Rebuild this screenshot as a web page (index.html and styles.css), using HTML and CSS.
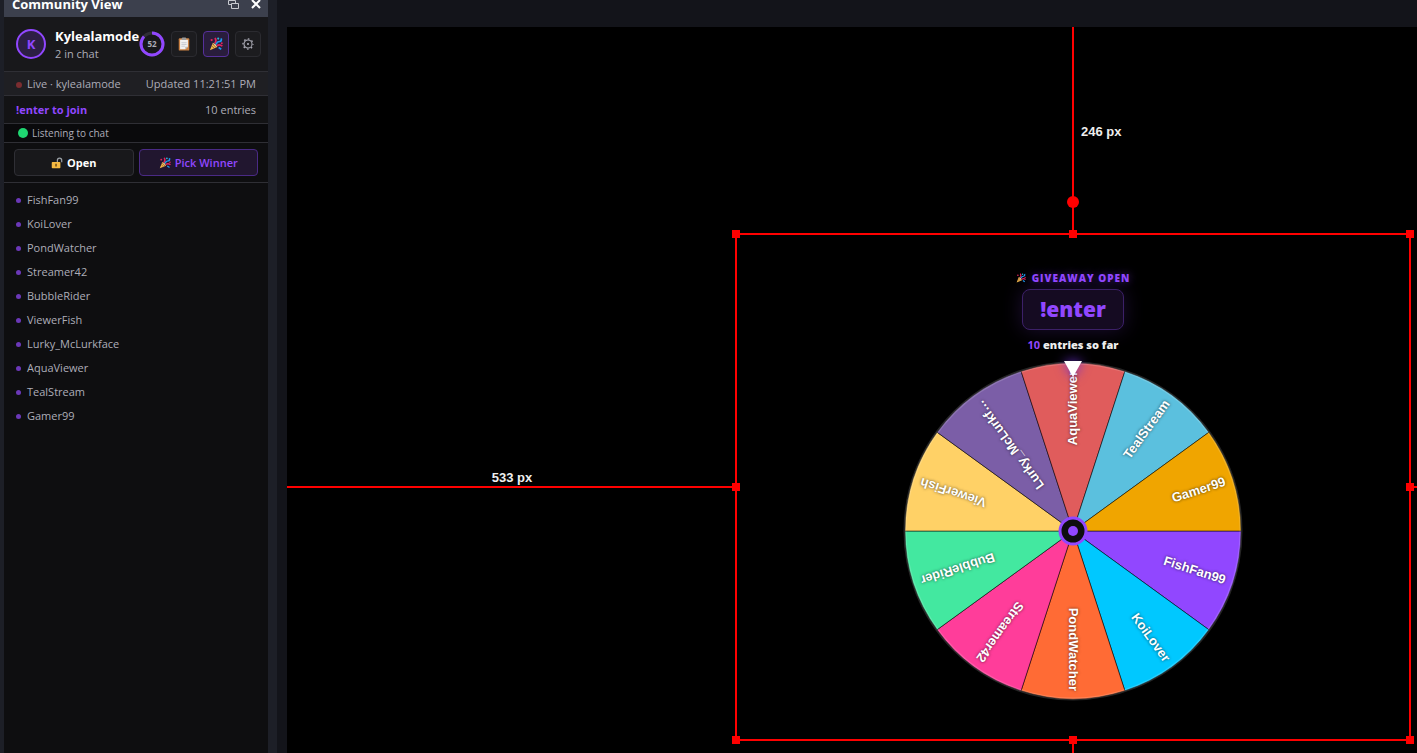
FILE: index.html
```html
<!DOCTYPE html>
<html lang="en">
<head>
    <meta charset="UTF-8">
    <meta name="viewport" content="width=device-width, initial-scale=1.0">
    <title>Community View</title>
    <link rel="stylesheet" href="styles.css">
</head>
<body>
    <svg class="defs" aria-hidden="true">
        <symbol id="party" viewBox="0 0 16 16">
            <path d="M1 15 L4.5 6.5 L9.5 11.5 Z" fill="#f2b84b"/>
            <path d="M3 10.2 L6 13 M4.2 7.6 L8 12" stroke="#8a5a2a" stroke-width="1"/>
            <path d="M4.5 6.5 Q8 7.5 9.5 11.5 Q6.5 10.5 4.5 6.5" fill="#f7d8a0"/>
            <path d="M6.5 7.5 Q9 4.5 7 1" stroke="#e0245e" stroke-width="2" fill="none"/>
            <path d="M8 8.5 Q9.5 4.8 12.5 5.2 Q14.6 4.6 14 1.5" stroke="#1d9bf0" stroke-width="1.9" fill="none"/>
            <path d="M9 10 Q12 7.6 15.3 10.4" stroke="#e0245e" stroke-width="2" fill="none"/>
            <path d="M11 12 L14 14" stroke="#1d9bf0" stroke-width="1.8"/>
            <circle cx="3" cy="3.5" r="1.3" fill="#e0245e"/>
            <circle cx="10.5" cy="1.8" r="1.2" fill="#29b6d8"/>
            <circle cx="14.6" cy="7" r="1.1" fill="#e0245e"/>
        </symbol>
        <symbol id="clipboard" viewBox="0 0 16 16">
            <rect x="2" y="1.5" width="12" height="14" rx="1" fill="#c98042"/>
            <path d="M3.5 3 H12.5 V11 L9.5 14 H3.5 Z" fill="#f1f1f1"/>
            <path d="M12.5 11 H9.5 V14 Z" fill="#b5b5b5"/>
            <path d="M5 6.5 H11 M5 8.5 H11 M5 10.5 H9" stroke="#b8bcc4" stroke-width="0.8"/>
            <rect x="5.5" y="0.5" width="5" height="3" rx="1" fill="#9a9a9a"/>
        </symbol>
        <symbol id="gear" viewBox="0 0 16 16">
            <circle cx="8" cy="8" r="4.6" fill="none" stroke="#adadb8" stroke-width="1.2"/>
            <circle cx="8" cy="8" r="5.8" fill="none" stroke="#adadb8" stroke-width="1.4" stroke-dasharray="1.8 2.755" stroke-dashoffset="0.9"/>
            <circle cx="8" cy="8" r="1.2" fill="#adadb8"/>
        </symbol>
        <symbol id="unlock" viewBox="0 0 16 16">
            <path d="M8.5 7 V4.5 A2.9 2.9 0 0 1 14.3 4.5 V7" fill="none" stroke="#9aa0a6" stroke-width="1.6"/>
            <rect x="1" y="6.5" width="11.5" height="8.5" rx="1" fill="#f5b942"/>
            <path d="M6.7 9 V12.5" stroke="#5b3c10" stroke-width="1.8"/>
        </symbol>
    </svg>

    <aside class="dock">
        <header class="dock-title">
            <h1>Community View</h1>
            <button class="dock-btn" aria-label="Float">
                <svg width="11" height="11" viewBox="0 0 11 11" fill="none" stroke="#c8cad0"><path d="M3.5 4.5 H0.5 V0.5 H7.5 V3.5"/><path d="M3.5 3.5 H10.5 V8.5 H3.5 Z"/></svg>
            </button>
            <button class="dock-btn" aria-label="Close">
                <svg width="10" height="10" viewBox="0 0 10 10" stroke="#fff" stroke-width="2"><path d="M1 0 L9 8 M9 0 L1 8"/></svg>
            </button>
        </header>

        <section class="profile">
            <div class="avatar">K</div>
            <div class="who">
                <strong>Kylealamode</strong>
                <span>2 in chat</span>
            </div>
            <div class="ring">
                <svg width="26" height="26" viewBox="0 0 26 26" fill="none" stroke-width="3">
                    <circle cx="13" cy="13" r="11" stroke="#2f2f35"/>
                    <circle cx="13" cy="13" r="11" stroke="#9147ff" pathLength="100" stroke-dasharray="87 13" transform="rotate(-90 13 13)"/>
                </svg>
                <span>52</span>
            </div>
            <button class="tool" aria-label="Log"><svg><use href="#clipboard"/></svg></button>
            <button class="tool active" aria-label="Giveaway"><svg><use href="#party"/></svg></button>
            <button class="tool" aria-label="Settings"><svg><use href="#gear"/></svg></button>
        </section>

        <div class="row status">
            <span class="live">Live · kylealamode</span>
            <span>Updated 11:21:51 PM</span>
        </div>
        <div class="row join">
            <strong>!enter to join</strong>
            <span>10 entries</span>
        </div>
        <div class="row listening">Listening to chat</div>

        <div class="actions">
            <button class="action"><svg><use href="#unlock"/></svg>Open</button>
            <button class="action pick"><svg><use href="#party"/></svg>Pick Winner</button>
        </div>

        <ul class="entries">
            <li>FishFan99</li>
            <li>KoiLover</li>
            <li>PondWatcher</li>
            <li>Streamer42</li>
            <li>BubbleRider</li>
            <li>ViewerFish</li>
            <li>Lurky_McLurkface</li>
            <li>AquaViewer</li>
            <li>TealStream</li>
            <li>Gamer99</li>
        </ul>
    </aside>

    <main class="preview">
        <div class="stage">
            <div class="source">
                <div class="guide guide-top"><span>246 px</span></div>
                <div class="guide guide-left"><span>533 px</span></div>
                <div class="guide guide-right"></div>
                <div class="guide guide-bottom"></div>

                <div class="giveaway">
                    <p class="headline"><svg><use href="#party"/></svg>GIVEAWAY OPEN</p>
                    <p class="command">!enter</p>
                    <p class="count"><b>10</b> entries so far</p>
                    <div class="wheel-box">
                        <svg id="wheel" viewBox="-172 -172 344 344"></svg>
                        <svg class="pointer" viewBox="0 0 18 16"><path d="M0 0 H18 L9 16 Z" fill="#fff"/></svg>
                    </div>
                </div>

                <i class="handle nw"></i>
                <i class="handle n"></i>
                <i class="handle ne"></i>
                <i class="handle w"></i>
                <i class="handle e"></i>
                <i class="handle sw"></i>
                <i class="handle s"></i>
                <i class="handle se"></i>
                <i class="rotate"></i>
            </div>
        </div>
    </main>

    <script>
        const names = ['FishFan99', 'KoiLover', 'PondWatcher', 'Streamer42', 'BubbleRider',
            'ViewerFish', 'Lurky_McLurkf…', 'AquaViewer', 'TealStream', 'Gamer99'];
        const colors = ['#9147ff', '#00c8ff', '#ff6b35', '#ff3d9a', '#43e8a0',
            '#ffd166', '#7b5ea7', '#e05c5c', '#5bc0de', '#f0a500'];
        const radius = 168;
        const step = 360 / names.length;
        const point = deg => {
            const a = deg * Math.PI / 180;
            return (radius * Math.cos(a)).toFixed(2) + ' ' + (radius * Math.sin(a)).toFixed(2);
        };

        let slices = '';
        let labels = '';
        names.forEach((name, i) => {
            slices += `<path class="slice" fill="${colors[i]}" d="M0 0 L${point(i * step)} A${radius} ${radius} 0 0 1 ${point((i + 1) * step)} Z"/>`;
            labels += `<text class="label" x="160" y="4" transform="rotate(${(i + 0.5) * step})">${name}</text>`;
        });

        document.getElementById('wheel').innerHTML = slices +
            `<circle class="rim" r="${radius}"/>` + labels +
            '<circle class="hub" r="13"/><circle class="hub-dot" r="5"/>';
    </script>
</body>
</html>
```
FILE: styles.css
```css
* {
    box-sizing: border-box;
}

body {
    margin: 0;
    display: flex;
    height: 100vh;
    overflow: hidden;
    background-color: #1d1f27;
    color: #adadb8;
    font-family: "Open Sans", "Noto Sans", sans-serif;
    font-size: 11px;
}

h1, p, ul {
    margin: 0;
    padding: 0;
}

button {
    font-family: inherit;
    cursor: pointer;
}

.defs {
    position: absolute;
    width: 0;
    height: 0;
}

/* side dock */
.dock {
    width: 264px;
    flex-shrink: 0;
    margin: 0 9px 0 4px;
    background-color: #0e0e10;
}

.dock-title {
    display: flex;
    align-items: flex-start;
    gap: 12px;
    height: 17px;
    padding: 0 7px 0 8px;
    background-color: #3c404d;
}

.dock-title h1 {
    flex: 1;
    font-size: 13px;
    line-height: 8px;
    font-weight: 700;
    color: #fff;
}

.dock-btn {
    display: flex;
    padding: 0;
    border: none;
    background: none;
}

.profile {
    display: flex;
    align-items: center;
    height: 55px;
    padding: 0 7px 0 12px;
    background-color: #18181b;
    border-bottom: 1px solid #2f2f35;
}

.avatar {
    width: 30px;
    height: 30px;
    flex-shrink: 0;
    border: 2px solid #9147ff;
    border-radius: 50%;
    background-color: #2d1f45;
    color: #9147ff;
    font-size: 13px;
    font-weight: 700;
    line-height: 26px;
    text-align: center;
}

.who {
    width: 84px;
    flex: 1;
    margin-left: 9px;
    padding-top: 2px;
    white-space: nowrap;
}

.who strong, .who span {
    display: block;
    line-height: 17px;
}

.who strong {
    font-size: 13px;
    color: #fff;
}

.ring {
    position: relative;
    width: 26px;
    height: 26px;
}

.ring span {
    position: absolute;
    inset: 0;
    font-size: 8px;
    font-weight: 700;
    line-height: 26px;
    text-align: center;
}

.tool {
    display: flex;
    align-items: center;
    justify-content: center;
    width: 26px;
    height: 26px;
    margin-left: 6px;
    padding: 0;
    border: 1px solid #2b2b30;
    border-radius: 4px;
    background-color: #1c1c1f;
}

.tool svg {
    width: 14px;
    height: 14px;
}

.tool.active {
    border-color: #56309a;
    background-color: #291d3c;
}

.row {
    display: flex;
    align-items: center;
    justify-content: space-between;
    padding: 0 12px;
    border-bottom: 1px solid #2f2f35;
}

.status {
    height: 24px;
    background-color: #1f1f23;
}

.live::before {
    content: "";
    display: inline-block;
    width: 6px;
    height: 6px;
    margin-right: 5px;
    border-radius: 50%;
    background-color: #7b2d30;
}

.join {
    height: 28px;
    background-color: #131315;
}

.join strong {
    color: #9147ff;
}

.listening {
    height: 19px;
    justify-content: flex-start;
    gap: 4px;
    padding: 0 14px;
    background-color: #0a0a0c;
    font-size: 10px;
}

.listening::before {
    content: "";
    width: 10px;
    height: 10px;
    border-radius: 50%;
    background-color: #1fd671;
}

.actions {
    display: flex;
    gap: 5px;
    padding: 6px 10px;
    border-bottom: 1px solid #2f2f35;
}

.action {
    display: flex;
    flex: 1;
    align-items: center;
    justify-content: center;
    gap: 4px;
    height: 27px;
    padding: 0;
    border: 1px solid #2f2f35;
    border-radius: 4px;
    background-color: #18181b;
    color: #fff;
    font-size: 11px;
    font-weight: 700;
}

.action svg {
    width: 12px;
    height: 12px;
}

.pick {
    border-color: #4a2a85;
    background-color: #21162f;
    color: #9147ff;
    font-weight: 600;
}

.entries {
    padding: 5px 12px;
    list-style: none;
    font-size: 11px;
    line-height: 24px;
}

.entries li {
    display: flex;
    align-items: center;
    gap: 6px;
}

.entries li::before {
    content: "";
    width: 5px;
    height: 5px;
    border-radius: 50%;
    background-color: #6b38b8;
}

/* preview canvas */
.preview {
    display: flex;
    flex: 1;
    padding: 27px 0 0 10px;
    background-color: #13141a;
}

.stage {
    position: relative;
    flex: 1;
    background-color: #000;
}

.source {
    position: absolute;
    left: 448px;
    top: 206px;
    width: 676px;
    height: 508px;
    border: 2px solid #f00;
}

.guide {
    position: absolute;
    background-color: #f00;
    color: #eee;
    font: bold 13px "Liberation Sans", Arial, sans-serif;
}

.guide span {
    position: absolute;
    white-space: nowrap;
}

.guide-top {
    left: calc(50% - 1px);
    bottom: 100%;
    width: 2px;
    height: 208px;
}

.guide-top span {
    left: 9px;
    top: 97px;
}

.guide-left {
    right: 100%;
    top: calc(50% - 1px);
    width: 450px;
    height: 2px;
}

.guide-left span {
    left: 0;
    right: 0;
    bottom: 3px;
    text-align: center;
}

.guide-right {
    left: 100%;
    top: calc(50% - 1px);
    width: 20px;
    height: 2px;
}

.guide-bottom {
    left: calc(50% - 1px);
    top: 100%;
    width: 2px;
    height: 20px;
}

.handle {
    position: absolute;
    width: 8px;
    height: 8px;
    background-color: #f00;
}

.nw, .n, .ne {
    top: -5px;
}

.w, .e {
    top: calc(50% - 4px);
}

.sw, .s, .se {
    bottom: -5px;
}

.nw, .w, .sw {
    left: -5px;
}

.n, .s {
    left: calc(50% - 4px);
}

.ne, .e, .se {
    right: -5px;
}

.rotate {
    position: absolute;
    left: calc(50% - 6px);
    top: -39px;
    width: 12px;
    height: 12px;
    border-radius: 50%;
    background-color: #f00;
}

/* giveaway overlay */
.giveaway {
    display: flex;
    flex-direction: column;
    align-items: center;
    padding-top: 36px;
}

.headline {
    display: flex;
    align-items: center;
    gap: 6px;
    color: #9147ff;
    font-size: 10px;
    font-weight: 800;
    line-height: 14px;
    letter-spacing: 1px;
    text-shadow: 0 0 8px rgba(145, 71, 255, 0.5);
}

.headline svg {
    width: 10px;
    height: 10px;
}

.command {
    margin-top: 4px;
    padding: 0 17px;
    border: 1px solid #3c2068;
    border-radius: 8px;
    background-color: #150b22;
    box-shadow: 0 0 20px rgba(145, 71, 255, 0.2);
    color: #9147ff;
    font-size: 21px;
    font-weight: 800;
    line-height: 39px;
}

.count {
    margin-top: 7px;
    color: #eee;
    font-size: 11px;
    font-weight: 800;
    line-height: 16px;
}

.count b {
    color: #9147ff;
    font-weight: 700;
}

.wheel-box {
    position: relative;
    width: 344px;
    height: 344px;
    margin-top: 6px;
}

#wheel {
    display: block;
    width: 100%;
    height: 100%;
}

.slice {
    stroke: rgba(0, 0, 0, 0.5);
    stroke-width: 1;
}

.rim {
    fill: none;
    stroke: rgba(255, 255, 255, 0.15);
    stroke-width: 3;
}

.label {
    fill: #fff;
    font: bold 13px "Liberation Sans", Arial, sans-serif;
    text-anchor: end;
    text-shadow: 0 0 3px rgba(0, 0, 0, 0.7);
}

.hub {
    fill: #0e0e10;
    stroke: #9147ff;
    stroke-width: 3;
}

.hub-dot {
    fill: #9147ff;
}

.pointer {
    position: absolute;
    left: calc(50% - 9px);
    top: 2px;
    width: 18px;
    height: 16px;
    overflow: visible;
    filter: drop-shadow(0 0 6px #6a2fd0);
}
```
